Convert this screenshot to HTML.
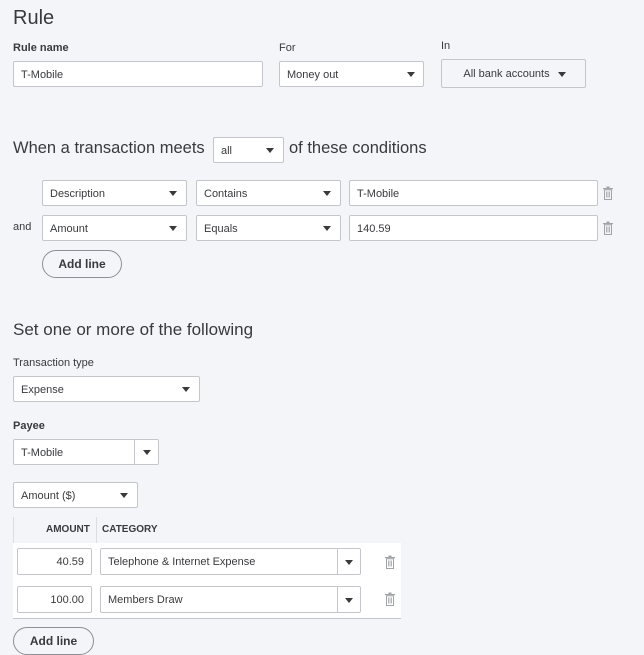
<!DOCTYPE html>
<html><head><meta charset="utf-8"><style>
*{box-sizing:border-box;margin:0;padding:0}
body{width:644px;height:652px;background:#f4f5f8;font-family:"Liberation Sans",sans-serif;color:#393a3d;position:relative;overflow:hidden}
.a{position:absolute;white-space:nowrap}
.box{position:absolute;background:#fff;border:1px solid #c4c6cb;border-radius:2px;font-size:11px;color:#393a3d;padding-left:7px;display:flex;align-items:center;padding-top:1px}
.car{position:absolute;top:50%;margin-top:-2px;width:0;height:0;border-left:4px solid transparent;border-right:4px solid transparent;border-top:5px solid #393a3d}
.lbl{font-size:11px;font-weight:bold;color:#393a3d}
.h{font-size:17px;color:#393a3d}
.btn{position:absolute;border:1px solid #8d9096;border-radius:14px;background:#f4f5f8;font-size:12px;font-weight:bold;display:flex;align-items:center;justify-content:center;color:#393a3d}
.tr{position:absolute;width:10px;height:14px}
</style></head><body>
<div class="a" style="left:13px;top:7px;font-size:20px;font-weight:300">Rule</div>
<div class="a lbl" style="left:13px;top:42px">Rule name</div>
<div class="a lbl" style="left:279px;top:42px;font-weight:normal">For</div>
<div class="a lbl" style="left:441px;top:40px;font-weight:normal">In</div>
<div class="box" style="left:13px;top:61px;width:250px;height:26px">T-Mobile</div>
<div class="box" style="left:279px;top:61px;width:145px;height:26px">Money out<span class="car" style="left:127px"></span></div>
<div class="box" style="left:441px;top:59px;width:145px;height:29px;justify-content:center;padding:0 14px 0 0;background:#f4f5f8">All bank accounts<span class="car" style="left:116px"></span></div>

<div class="a h" style="left:13px;top:139px;font-size:16.5px">When a transaction meets</div>
<div class="box" style="left:213px;top:137px;width:71px;height:26px">all<span class="car" style="left:52px"></span></div>
<div class="a h" style="left:289px;top:139px;font-size:16.5px">of these conditions</div>

<div class="box" style="left:42px;top:180px;width:145px;height:26px">Description<span class="car" style="left:126px"></span></div>
<div class="box" style="left:196px;top:180px;width:145px;height:26px">Contains<span class="car" style="left:126px"></span></div>
<div class="box" style="left:349px;top:180px;width:249px;height:26px">T-Mobile</div>
<div class="a" style="left:13px;top:221px;font-size:11px">and</div>
<div class="box" style="left:42px;top:215px;width:145px;height:26px">Amount<span class="car" style="left:126px"></span></div>
<div class="box" style="left:196px;top:215px;width:145px;height:26px">Equals<span class="car" style="left:126px"></span></div>
<div class="box" style="left:349px;top:215px;width:249px;height:26px">140.59</div>
<svg class="tr" style="left:603px;top:186px" viewBox="0 0 10 14"><rect x="0" y="2" width="10" height="1.2" fill="#a0a3a8"/><rect x="3.5" y="0.5" width="3" height="1.5" fill="#a0a3a8"/><rect x="1.5" y="3.8" width="7" height="9.7" fill="none" stroke="#a0a3a8" stroke-width="1"/><path d="M3.5 5.5v6M5 5.5v6M6.5 5.5v6" stroke="#a0a3a8" stroke-width=".8"/></svg>
<svg class="tr" style="left:603px;top:221px" viewBox="0 0 10 14"><rect x="0" y="2" width="10" height="1.2" fill="#a0a3a8"/><rect x="3.5" y="0.5" width="3" height="1.5" fill="#a0a3a8"/><rect x="1.5" y="3.8" width="7" height="9.7" fill="none" stroke="#a0a3a8" stroke-width="1"/><path d="M3.5 5.5v6M5 5.5v6M6.5 5.5v6" stroke="#a0a3a8" stroke-width=".8"/></svg>
<div class="btn" style="left:42px;top:250px;width:80px;height:28px">Add line</div>

<div class="a h" style="left:13px;top:320px">Set one or more of the following</div>
<div class="a" style="left:13px;top:357px;font-size:11px">Transaction type</div>
<div class="box" style="left:13px;top:376px;width:187px;height:26px">Expense<span class="car" style="left:168px"></span></div>
<div class="a lbl" style="left:13px;top:420px">Payee</div>
<div class="box" style="left:13px;top:439px;width:146px;height:26px">T-Mobile<span style="position:absolute;left:120px;top:0;bottom:0;border-left:1px solid #c4c6cb"></span><span class="car" style="left:129px"></span></div>
<div class="box" style="left:13px;top:482px;width:125px;height:26px">Amount ($)<span class="car" style="left:106px"></span></div>

<div class="a" style="left:13px;top:517px;width:387px;height:26px;border-left:1px solid #dcdde0"></div>
<div class="a" style="left:96px;top:517px;height:26px;border-left:1px solid #dcdde0"></div>
<div class="a" style="left:46px;top:524px;font-size:10px;font-weight:bold">AMOUNT</div>
<div class="a" style="left:102px;top:524px;font-size:10px;font-weight:bold">CATEGORY</div>
<div class="a" style="left:13px;top:543px;width:388px;height:76px;background:#fff;border-bottom:1px solid #c4c6cb"></div>
<div class="box" style="left:17px;top:548px;width:75px;height:27px;justify-content:flex-end;padding-right:7px">40.59</div>
<div class="box" style="left:100px;top:548px;width:261px;height:27px">Telephone &amp; Internet Expense<span style="position:absolute;left:236px;top:0;bottom:0;border-left:1px solid #c4c6cb"></span><span class="car" style="left:244px"></span></div>
<div class="box" style="left:17px;top:586px;width:75px;height:27px;justify-content:flex-end;padding-right:7px">100.00</div>
<div class="box" style="left:100px;top:586px;width:261px;height:27px">Members Draw<span style="position:absolute;left:236px;top:0;bottom:0;border-left:1px solid #c4c6cb"></span><span class="car" style="left:244px"></span></div>
<svg class="tr" style="left:385px;top:555px" viewBox="0 0 10 14"><rect x="0" y="2" width="10" height="1.2" fill="#a0a3a8"/><rect x="3.5" y="0.5" width="3" height="1.5" fill="#a0a3a8"/><rect x="1.5" y="3.8" width="7" height="9.7" fill="none" stroke="#a0a3a8" stroke-width="1"/><path d="M3.5 5.5v6M5 5.5v6M6.5 5.5v6" stroke="#a0a3a8" stroke-width=".8"/></svg>
<svg class="tr" style="left:385px;top:592px" viewBox="0 0 10 14"><rect x="0" y="2" width="10" height="1.2" fill="#a0a3a8"/><rect x="3.5" y="0.5" width="3" height="1.5" fill="#a0a3a8"/><rect x="1.5" y="3.8" width="7" height="9.7" fill="none" stroke="#a0a3a8" stroke-width="1"/><path d="M3.5 5.5v6M5 5.5v6M6.5 5.5v6" stroke="#a0a3a8" stroke-width=".8"/></svg>
<div class="btn" style="left:13px;top:627px;width:81px;height:28px">Add line</div>
</body></html>
